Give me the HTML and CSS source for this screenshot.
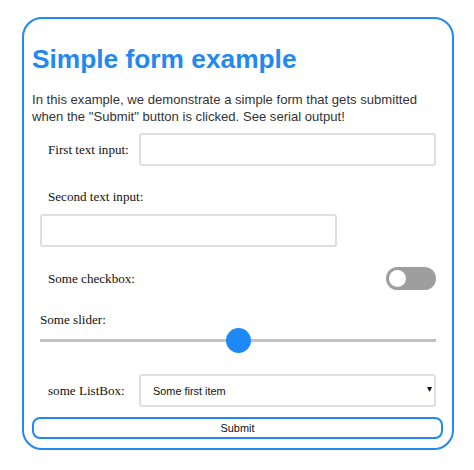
FILE: index.html
```html
<!DOCTYPE html>
<html>
<head>
<title>Simple form example</title>
<link rel="stylesheet" href="styles.css">
</head>
<body>

<div class="card">

<h1>Simple form example</h1>
<p class="intro">In this example, we demonstrate a simple form that gets submitted when the "Submit" button is clicked. See serial output!</p>

<form>

<div class="row">
<label class="lbl" for="text1">First text input:</label>
<input type="text" class="field" id="text1">
</div>

<div class="row stacked">
<label class="lbl" for="text2">Second text input:</label>
<input type="text" class="field short" id="text2">
</div>

<div class="row check">
<label class="lbl" for="cb1">Some checkbox:</label>
<label class="switch">
<input type="checkbox" id="cb1">
<span class="knob"></span>
</label>
</div>

<div class="row slider">
<label class="lbl flush" for="sl1">Some slider:</label>
<input type="range" class="range" id="sl1" min="0" max="100" value="50">
</div>

<div class="row">
<label class="lbl" for="lb1">some ListBox:</label>
<div class="selectwrap">
<select class="field pick" id="lb1">
<option>Some first item</option>
<option>Some second item</option>
<option>Some third item</option>
</select>
<span class="arrow">&#9662;</span>
</div>
</div>

<button type="submit" class="submit">Submit</button>

</form>

</div>

</body>
</html>
```

FILE: styles.css
```css
body{
margin:8px;
background-color:white;
}

.card{
margin:9px 12px 0 14px;
border:2px solid #2189f0;
border-radius:20px;
padding:25px 9px 9px 8px;
}

h1{
font-family:"Liberation Sans", Arial, sans-serif;
font-size:26.3px;
font-weight:bold;
color:#2189f0;
margin:0;
line-height:30px;
}

.intro{
font-family:"Liberation Sans", Arial, sans-serif;
font-size:13.1px;
line-height:16.5px;
color:#333;
margin:18px 0 0 0;
}

form{
margin:0;
}

.row{
display:flex;
align-items:center;
padding:0 7px 0 8px;
margin-top:8px;
}

.lbl{
font-family:"Liberation Serif", "Times New Roman", serif;
font-size:13.1px;
color:#111;
flex:0 0 91px;
margin-left:8px;
}

.lbl.flush{
margin-left:0;
}

.field{
flex:1;
height:33px;
box-sizing:border-box;
border:2px solid #dedede;
border-radius:3px;
background:white;
margin:0;
}

.stacked{
display:block;
margin-top:23px;
}

.stacked .lbl{
display:block;
line-height:15px;
}

.field.short{
display:block;
width:297px;
margin-top:10px;
}

.check{
margin-top:20px;
justify-content:space-between;
}

.switch{
position:relative;
display:block;
width:50px;
height:23px;
}

.switch input{
display:none;
}

.knob{
position:absolute;
left:0;
top:0;
right:0;
bottom:0;
background-color:#9e9e9e;
border-radius:12px;
}

.knob:before{
content:"";
position:absolute;
left:3px;
top:3px;
width:17px;
height:17px;
border-radius:50%;
background-color:white;
}

.slider{
display:block;
margin-top:22px;
}

.slider .lbl{
display:block;
line-height:15px;
}

.range{
-webkit-appearance:none;
appearance:none;
display:block;
width:100%;
height:25px;
margin:1px 0 0 0;
background:transparent;
}

.range::-webkit-slider-runnable-track{
height:3px;
background:#c2c2c2;
}

.range::-webkit-slider-thumb{
-webkit-appearance:none;
width:25px;
height:25px;
border-radius:50%;
background:#1e88f5;
margin-top:-11px;
border:none;
}

.slider + .row{
margin-top:21px;
}

.selectwrap{
flex:1;
position:relative;
display:flex;
}

.pick{
-webkit-appearance:none;
appearance:none;
font-family:"Liberation Sans", Arial, sans-serif;
font-size:10.9px;
color:#111;
padding:0 0 0 12px;
}

.arrow{
position:absolute;
right:4px;
top:9px;
font-size:10px;
color:#111;
pointer-events:none;
}

.submit{
display:block;
width:100%;
height:22px;
margin-top:10px;
border:2px solid #2189f0;
border-radius:8px;
background:white;
font-family:"Liberation Sans", Arial, sans-serif;
font-size:10.9px;
color:#111;
}
```
